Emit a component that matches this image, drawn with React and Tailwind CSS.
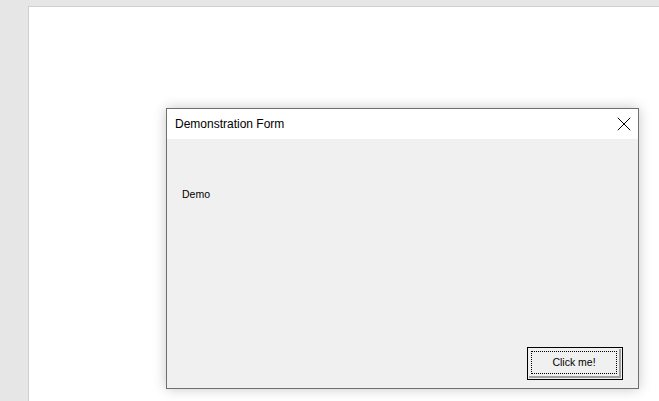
import { X } from 'lucide-react'

const font = { fontFamily: '"Liberation Sans", Arial, sans-serif' }

export default function App() {
  return (
    <div className="w-[659px] h-[401px] bg-[#e6e6e6] pl-[28px] pt-[6px] flex overflow-hidden" style={font}>
      {/* Page canvas */}
      <div className="flex-1 bg-white border-l border-t border-[#cfcfcf] pl-[137px] pt-[101px]">
        {/* Form window */}
        <div className="w-[473px] h-[281px] border border-[#6f6f6f] bg-[#f0f0f0] flex flex-col shadow-[0_0_12px_rgba(0,0,0,0.22)]">
          <div className="h-[30px] bg-white flex items-center justify-between pl-[8px] pr-[2px]">
            <span className="text-[12px] text-black leading-none">Demonstration Form</span>
            <X size={24} strokeWidth={1} className="text-black" />
          </div>
          <div className="flex-1 flex flex-col pl-[15px] pr-[15px] pb-[8px]">
            <div className="text-[10.5px] text-black mt-[50px] leading-none">Demo</div>
            <div className="flex-1" />
            <div className="flex justify-end">
              <button className="w-[96px] h-[33px] border border-black bg-[#f0f0f0] p-[1px]">
                <div className="w-full h-full border-r-2 border-b-2 border-[#a0a0a0] p-[2px]">
                  <div className="w-full h-full border border-dotted border-black flex items-center justify-center text-[10.5px] text-black">
                    Click me!
                  </div>
                </div>
              </button>
            </div>
          </div>
        </div>
      </div>
    </div>
  )
}
